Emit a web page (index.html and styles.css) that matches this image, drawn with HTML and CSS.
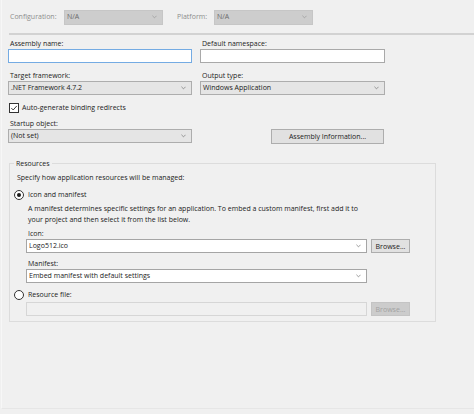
FILE: index.html
```html
<!DOCTYPE html>
<html>
<head>
<meta charset="utf-8">
<link rel="stylesheet" href="styles.css">
</head>
<body>
<div class="page">
  <div class="topbar">
    <span class="tlabel">Configuration:</span>
    <div class="combo combo-off w-top"><span>N/A</span><svg class="chev" viewBox="0 0 6 4"><path d="M0.5 0.5 L3 3 L5.5 0.5"/></svg></div>
    <span class="tlabel tlabel-plat">Platform:</span>
    <div class="combo combo-off w-top"><span>N/A</span><svg class="chev" viewBox="0 0 6 4"><path d="M0.5 0.5 L3 3 L5.5 0.5"/></svg></div>
  </div>
  <div class="sep"></div>

  <div class="form">
    <div class="row2">
      <div class="field">
        <div class="lbl">Assembly name:</div>
        <div class="textbox focused"></div>
      </div>
      <div class="field">
        <div class="lbl">Default namespace:</div>
        <div class="textbox"></div>
      </div>
    </div>

    <div class="row2 row-gap">
      <div class="field">
        <div class="lbl">Target framework:</div>
        <div class="combo combo-ro"><span>.NET Framework 4.7.2</span><svg class="chev" viewBox="0 0 6 4"><path d="M0.5 0.5 L3 3 L5.5 0.5"/></svg></div>
      </div>
      <div class="field">
        <div class="lbl">Output type:</div>
        <div class="combo combo-ro"><span>Windows Application</span><svg class="chev" viewBox="0 0 6 4"><path d="M0.5 0.5 L3 3 L5.5 0.5"/></svg></div>
      </div>
    </div>

    <div class="checkrow">
      <span class="checkbox"><svg viewBox="0 0 9 9"><path d="M1.5 4.6 L3.6 6.7 L7.6 2.2"/></svg></span>
      <span>Auto-generate binding redirects</span>
    </div>

    <div class="row2 row-startup">
      <div class="field">
        <div class="lbl">Startup object:</div>
        <div class="combo combo-ro"><span>(Not set)</span><svg class="chev" viewBox="0 0 6 4"><path d="M0.5 0.5 L3 3 L5.5 0.5"/></svg></div>
      </div>
      <div class="field field-btn">
        <div class="btn btn-asm">Assembly Information...</div>
      </div>
    </div>

    <fieldset class="group">
      <legend>Resources</legend>
      <div class="intro">Specify how application resources will be managed:</div>
      <div class="radiorow">
        <span class="radio checked"></span><span>Icon and manifest</span>
      </div>
      <div class="desc">A manifest determines specific settings for an application. To embed a custom manifest, first add it to your project and then select it from the list below.</div>
      <div class="sub">
        <div class="lbl">Icon:</div>
        <div class="boxrow">
          <div class="combo combo-edit w-wide"><span>Logo512.ico</span><svg class="chev" viewBox="0 0 6 4"><path d="M0.5 0.5 L3 3 L5.5 0.5"/></svg></div>
          <div class="btn btn-browse">Browse...</div>
        </div>
        <div class="lbl lbl-man">Manifest:</div>
        <div class="boxrow">
          <div class="combo combo-edit w-wide"><span>Embed manifest with default settings</span><svg class="chev" viewBox="0 0 6 4"><path d="M0.5 0.5 L3 3 L5.5 0.5"/></svg></div>
        </div>
      </div>
      <div class="radiorow radiorow-res">
        <span class="radio"></span><span>Resource file:</span>
      </div>
      <div class="sub sub-res">
        <div class="boxrow">
          <div class="textbox textbox-off w-wide"></div>
          <div class="btn btn-browse btn-off">Browse...</div>
        </div>
      </div>
    </fieldset>
  </div>
</div>
</body>
</html>
```

FILE: styles.css
```css
* { box-sizing: border-box; }
html, body {
  margin: 0;
  padding: 0;
  background: #f0f0f0;
}
body {
  font-family: "Open Sans", "Noto Sans", "Liberation Sans", sans-serif;
  font-size: 7px;
  color: #1b1b1b;
  width: 474px;
  height: 414px;
  overflow: hidden;
}
.page {
  height: 409px;
  border-left: 1px solid #f7f7f7;
  border-bottom: 1px solid #e6e6e6;
  margin-left: 1px;
}

/* top bar */
.topbar {
  display: flex;
  align-items: center;
  padding: 10px 0 0 8px;
  height: 24px;
}
.tlabel {
  color: #8d8d8d;
  width: 54px;
  line-height: 14px;
  white-space: nowrap;
}
.tlabel-plat {
  width: 37px;
  margin-left: 14px;
}
.w-top { width: 99px; }
.sep {
  margin: 9px 0 0 7px;
  height: 2px;
  background: #d2d2d2;
}

/* form */
.form {
  padding-left: 6px;
}
.row2 {
  display: grid;
  grid-template-columns: 184px 185px;
  column-gap: 8px;
  margin-top: 3px;
}
.row-gap { margin-top: 7px; }
.row-startup { margin-top: 5px; }
.field {
  display: flex;
  flex-direction: column;
}
.field-btn {
  justify-content: flex-end;
  align-items: flex-end;
}
.lbl {
  line-height: 11px;
  height: 11px;
  padding-left: 2px;
  white-space: nowrap;
}
.textbox {
  height: 14px;
  background: #ffffff;
  border: 1px solid #a9a9a9;
}
.textbox.focused { border-color: #74abe3; }
.textbox-off {
  background: #f0f0f0;
  border-color: #d6d6d6;
}

.combo {
  height: 14px;
  display: flex;
  align-items: center;
  justify-content: space-between;
  padding: 0 5px 0 2px;
  border: 1px solid #adadad;
  white-space: nowrap;
  line-height: 12px;
}
.combo-ro { background: #e5e5e5; }
.combo-edit { background: #ffffff; border-color: #a5a5a5; }
.combo-off {
  background: #cdcdcd;
  border-color: #c6c6c6;
  color: #6a6a6a;
  height: 15px;
}
.chev {
  width: 5px;
  height: 4px;
  fill: none;
  stroke: #7a7a7a;
  stroke-width: 0.9;
}
.combo-off .chev { stroke: #9a9a9a; }

.checkrow {
  display: flex;
  align-items: center;
  gap: 3px;
  height: 11px;
  margin-top: 7px;
  padding-left: 1px;
}
.checkbox {
  width: 10px;
  height: 10px;
  border: 1px solid #333333;
  background: #ffffff;
  display: flex;
  align-items: center;
  justify-content: center;
}
.checkbox svg {
  width: 8px;
  height: 8px;
  fill: none;
  stroke: #222222;
  stroke-width: 1;
}

.btn {
  display: flex;
  align-items: center;
  justify-content: center;
  background: #e1e1e1;
  border: 1px solid #adadad;
  white-space: nowrap;
}
.btn-asm {
  width: 113px;
  height: 15px;
  margin-bottom: -1px;
  margin-right: 1px;
}
.btn-browse {
  width: 39px;
  height: 14px;
}
.btn-off {
  background: #cccccc;
  border-color: #c4c4c4;
  color: #a2a2a2;
}

/* group */
.group {
  margin: 15px 0 0 1px;
  width: 427px;
  border: 1px solid #dcdcdc;
  padding: 3px 3px 5px 3px;
  min-width: 0;
}
.group legend {
  padding: 0 2px;
  margin-left: 1px;
  line-height: 11px;
}
.intro {
  line-height: 11px;
  padding-left: 4px;
}
.radiorow {
  display: flex;
  align-items: center;
  gap: 4px;
  height: 11px;
  margin-top: 6px;
  padding-left: 1px;
}
.radio {
  width: 10px;
  height: 10px;
  border: 1px solid #333333;
  border-radius: 50%;
  background: #ffffff;
  display: flex;
  align-items: center;
  justify-content: center;
}
.radio.checked::after {
  content: "";
  width: 4px;
  height: 4px;
  border-radius: 50%;
  background: #1b1b1b;
}
.desc {
  margin-left: 15px;
  width: 340px;
  line-height: 11px;
  margin-top: 3px;
}
.sub {
  margin-left: 13px;
  margin-top: 3px;
}
.boxrow {
  display: flex;
  gap: 4px;
}
.w-wide { width: 341px; }
.lbl-man { margin-top: 5px; }
.radiorow-res { margin-top: 6px; }
.sub-res { margin-top: 2px; }
```
